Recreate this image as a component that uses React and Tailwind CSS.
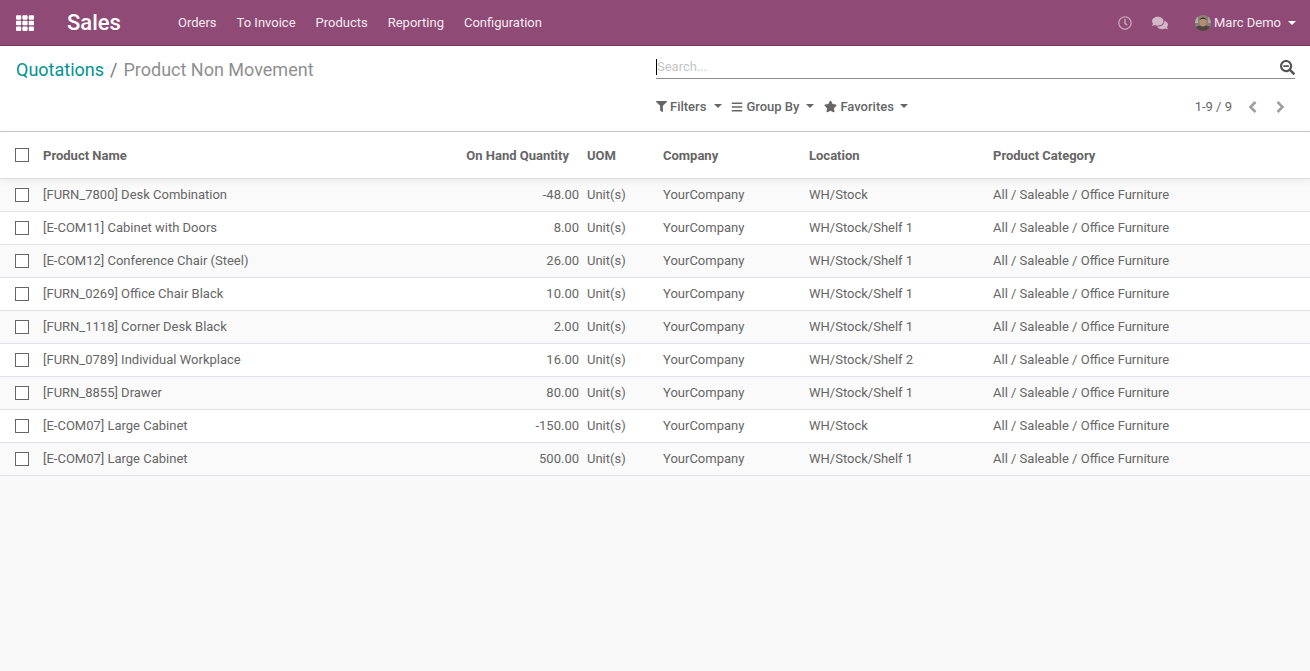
import { FaTh, FaFilter, FaBars, FaStar, FaSearchMinus, FaRegClock, FaComments } from "react-icons/fa";

const rows = [
  ["[FURN_7800] Desk Combination", "-48.00", "WH/Stock"],
  ["[E-COM11] Cabinet with Doors", "8.00", "WH/Stock/Shelf 1"],
  ["[E-COM12] Conference Chair (Steel)", "26.00", "WH/Stock/Shelf 1"],
  ["[FURN_0269] Office Chair Black", "10.00", "WH/Stock/Shelf 1"],
  ["[FURN_1118] Corner Desk Black", "2.00", "WH/Stock/Shelf 1"],
  ["[FURN_0789] Individual Workplace", "16.00", "WH/Stock/Shelf 2"],
  ["[FURN_8855] Drawer", "80.00", "WH/Stock/Shelf 1"],
  ["[E-COM07] Large Cabinet", "-150.00", "WH/Stock"],
  ["[E-COM07] Large Cabinet", "500.00", "WH/Stock/Shelf 1"],
];

const menus = ["Orders", "To Invoice", "Products", "Reporting", "Configuration"];

function Caret({ className }) {
  return (
    <span className={"inline-block w-0 h-0 border-x-[4px] border-x-transparent border-t-[4px] " + className} />
  );
}

function Checkbox() {
  return <div className="w-[14px] h-[14px] border border-[#666666] bg-white" />;
}

function Chevron({ d, className }) {
  return (
    <svg width="9" height="12" viewBox="0 0 9 12" className={className}>
      <path d={d} fill="none" stroke="#a0a0a0" strokeWidth="2.6" />
    </svg>
  );
}

function Avatar() {
  return (
    <svg width="16" height="16" viewBox="0 0 16 16" className="rounded-full">
      <rect width="16" height="16" fill="#8a8079" />
      <path d="M0 16 L0 12 L5 10.5 L11 10.5 L16 12 L16 16 Z" fill="#4f4640" />
      <ellipse cx="8" cy="7" rx="3.4" ry="4.6" fill="#b58e72" />
      <path d="M4.5 5.5 C5 1.5 11 1.5 11.5 5.5 L10 4 L6 4 Z" fill="#3b322c" />
      <rect x="0" y="0" width="3" height="8" fill="#b5afa8" />
      <rect x="13" y="1" width="3" height="7" fill="#a9a39d" />
    </svg>
  );
}

function Dropdown({ icon, label, className, gap, caret }) {
  return (
    <div className={"flex items-center " + className}>
      {icon}
      <span className={"text-[13px] font-medium text-[#666666] " + gap}>{label}</span>
      <Caret className={"border-t-[#666666] -mt-[2px] " + caret} />
    </div>
  );
}

export default function App() {
  return (
    <div className="w-[1310px] h-[671px] overflow-hidden bg-[#f9f9f9] flex flex-col text-[13px] text-[#666666] font-['Roboto',sans-serif]">
      <div className="h-[46px] shrink-0 bg-[#8f4a76] border-b border-[#6d3a5b] flex items-center text-white">
        <FaTh className="ml-4 w-[18px] h-[18px] text-white" />
        <div className="ml-[33px] w-[111px] text-[22px] font-medium leading-none">Sales</div>
        <div className="flex items-center gap-5 text-[13px] text-[#f5ecf2]">
          {menus.map((m) => (
            <span key={m}>{m}</span>
          ))}
        </div>
        <div className="ml-auto flex items-center">
          <FaRegClock className="w-[14px] h-[14px] text-[#c9a5bc]" />
          <FaComments className="ml-[20px] w-[16px] h-[16px] text-[#d3b7c9]" />
          <div className="ml-[27px]"><Avatar /></div>
          <span className="ml-[3px] text-[13px] text-[#f5ecf2]">Marc Demo</span>
          <Caret className="border-t-white ml-[7px] mr-[14px]" />
        </div>
      </div>

      <div className="h-[86px] shrink-0 bg-white border-b border-[#c8c8c8] flex">
        <div className="w-[656px] pl-4 pt-[11px] text-[18px] leading-[26px]">
          <span className="text-[#00938f]">Quotations</span>
          <span className="text-[#777777] mx-[6px]">/</span>
          <span className="text-[#8f8f8f]">Product Non Movement</span>
        </div>
        <div className="w-[639px] flex flex-col">
          <div className="mt-[10px] h-[23px] border-b border-[#8c8c8c] flex items-center justify-between">
            <span className="border-l border-black text-[13px] leading-[16px] text-[#c4c4c4]">Search...</span>
            <FaSearchMinus className="w-[15px] h-[15px] text-[#555555] mt-[1px]" />
          </div>
          <div className="mt-[18px] flex items-center">
            <Dropdown icon={<FaFilter className="w-[11px] h-[11px] text-[#666666]" />} label="Filters" gap="ml-[3px]" caret="ml-[8px]" />
            <Dropdown icon={<FaBars className="w-[12px] h-[12px] text-[#666666]" />} label="Group By" gap="ml-[3px]" caret="ml-[7px]" className="ml-[9px]" />
            <Dropdown icon={<FaStar className="w-[13px] h-[13px] text-[#666666]" />} label="Favorites" gap="ml-[3px]" caret="ml-[6px]" className="ml-[10px]" />
            <span className="ml-auto text-[13px] text-[#666666]">1-9 / 9</span>
            <Chevron d="M7.5 1 L2.5 6 L7.5 11" className="ml-[16px]" />
            <Chevron d="M1.5 1 L6.5 6 L1.5 11" className="ml-[19px] mr-[10px]" />
          </div>
        </div>
      </div>

      <div className="bg-white">
        <div className="h-[47px] pt-[2px] grid grid-cols-[43px_526px_18px_76px_146px_184px_1fr] items-center border-b border-[#dcdcdc] font-bold shadow-[0_2px_8px_rgba(0,0,0,0.07)] relative z-10 bg-white">
          <div className="pl-[15px] -mt-[2px]"><Checkbox /></div>
          <div className="relative">
            Product Name
            <span className="absolute right-0 top-0">On Hand Quantity</span>
          </div>
          <div />
          <div>UOM</div>
          <div>Company</div>
          <div>Location</div>
          <div>Product Category</div>
        </div>
        {rows.map((r, i) => (
          <div
            key={i}
            className={"h-[33px] grid grid-cols-[43px_536px_8px_76px_146px_184px_1fr] items-center border-b border-[#dee2e6] " + (i % 2 === 0 ? "bg-[#fafafa]" : "bg-white")}
          >
            <div className="pl-[15px]"><Checkbox /></div>
            <div className="flex justify-between">
              <span>{r[0]}</span>
              <span>{r[1]}</span>
            </div>
            <div />
            <div>Unit(s)</div>
            <div>YourCompany</div>
            <div>{r[2]}</div>
            <div>All / Saleable / Office Furniture</div>
          </div>
        ))}
      </div>
    </div>
  );
}
